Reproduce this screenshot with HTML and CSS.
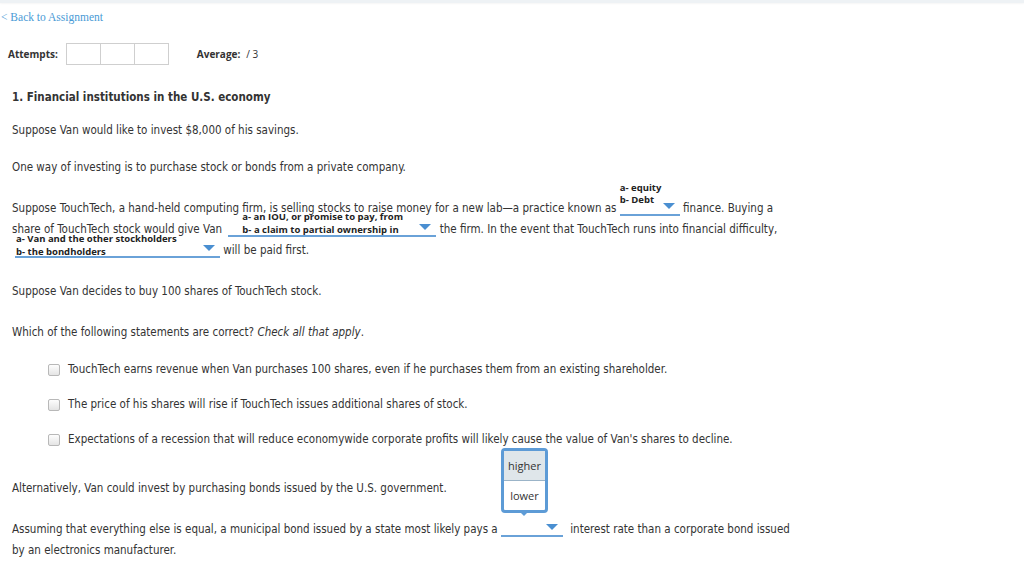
FILE: index.html
```html
<!DOCTYPE html>
<html>
<head>
    <title>Financial institutions in the U.S. economy</title>
    <link rel="stylesheet" href="styles.css">
</head>
<body>
    <div class="topbar"></div>
    <div class="header">
        <a class="back-link" href="#">&lt; Back to Assignment</a>
        <div class="attempts">
            <span class="attempts-label">Attempts:</span>
            <div class="attempt-boxes"><span></span><span></span><span></span></div>
            <span class="attempts-label average">Average:</span>
            <span class="score">/ 3</span>
        </div>
    </div>

    <div class="question">
        <h2 class="title">1. Financial institutions in the U.S. economy</h2>
        <p class="gap-12">Suppose Van would like to invest $8,000 of his savings.</p>
        <p class="gap-16">One way of investing is to purchase stock or bonds from a private company.</p>
        <p>Suppose TouchTech, a hand-held computing firm, is selling stocks to raise money for a new lab&mdash;a practice known as <span class="blank blank-finance"><span class="note">a- equity<br>b- Debt</span></span> finance. Buying a share of TouchTech stock would give Van <span class="blank blank-give"><span class="note">a- an IOU, or promise to pay, from<br>b- a claim to partial ownership in</span></span> the firm. In the event that TouchTech runs into financial difficulty, <span class="blank blank-paid"><span class="note">a- Van and the other stockholders<br>b- the bondholders</span></span> will be paid first.</p>
        <p>Suppose Van decides to buy 100 shares of TouchTech stock.</p>
        <p>Which of the following statements are correct? <em>Check all that apply</em>.</p>

        <ul class="choices">
            <li><input type="checkbox"> TouchTech earns revenue when Van purchases 100 shares, even if he purchases them from an existing shareholder.</li>
            <li><input type="checkbox"> The price of his shares will rise if TouchTech issues additional shares of stock.</li>
            <li><input type="checkbox"> Expectations of a recession that will reduce economywide corporate profits will likely cause the value of Van's shares to decline.</li>
        </ul>

        <p class="gap-28">Alternatively, Van could invest by purchasing bonds issued by the U.S. government.</p>
        <p>Assuming that everything else is equal, a municipal bond issued by a state most likely pays a <span class="blank blank-rate"><span class="popup"><span class="option option-active">higher</span><span class="option">lower</span></span></span> interest rate than a corporate bond issued by an electronics manufacturer.</p>
    </div>
</body>
</html>
```

FILE: styles.css
```css
body {
    margin: 0;
    padding: 0;
    background: #fff;
    color: #333;
    font-family: "DejaVu Sans", sans-serif;
}
.topbar {
    height: 3px;
    background: #eef2f5;
    box-shadow: 0 1px 2px rgba(0, 0, 0, 0.04);
}
.header {
    padding: 7px 0 0 0;
}
.back-link {
    display: block;
    padding-left: 1px;
    font-family: "Liberation Serif", serif;
    font-size: 11.5px;
    line-height: 14px;
    color: #4a9bd6;
    text-decoration: none;
}
.attempts {
    display: flex;
    align-items: center;
    margin-top: 19px;
    padding-left: 8px;
    font-family: "Open Sans", sans-serif;
    font-size: 10px;
    color: #333;
}
.attempts-label {
    font-weight: bold;
}
.attempt-boxes {
    display: flex;
    margin-left: 8px;
    border: 1px solid #cfcfcf;
}
.attempt-boxes span {
    width: 33px;
    height: 20px;
    border-left: 1px solid #cfcfcf;
}
.attempt-boxes span:first-child {
    border-left: none;
}
.average {
    margin-left: 28px;
}
.score {
    margin-left: 6px;
}

.question {
    width: 786px;
    padding-left: 12px;
    font-family: "DejaVu Sans Condensed", "DejaVu Sans", sans-serif;
    font-stretch: semi-condensed;
    font-size: 11.5px;
    line-height: 21px;
}
.title {
    margin: 22px 0 0;
    font-size: 11.5px;
    font-weight: bold;
    line-height: 21px;
}
.question p {
    margin: 20px 0 0;
}
.question p.gap-12 {
    margin-top: 12px;
}
.question p.gap-16 {
    margin-top: 16px;
}
.question p.gap-28 {
    margin-top: 28px;
}

/* dropdown blanks */
.blank {
    position: relative;
    display: inline-block;
    height: 14px;
    vertical-align: -4px;
    border-bottom: 2px solid #6aa2d8;
}
.blank::after {
    content: "";
    position: absolute;
    right: 5px;
    bottom: 5px;
    border-left: 6px solid transparent;
    border-right: 6px solid transparent;
    border-top: 6px solid #4a8fd1;
}
.blank-finance {
    width: 60px;
}
.blank-give {
    width: 208px;
    margin-left: 3px;
}
.blank-paid {
    width: 205px;
    margin-left: 3px;
}
.blank-rate {
    width: 62px;
    margin-right: 4px;
}
.note {
    position: absolute;
    left: 0;
    white-space: nowrap;
    font-family: "Open Sans", sans-serif;
    font-stretch: normal;
    font-size: 9.5px;
    font-weight: bold;
    line-height: 13px;
    color: #222;
}
.blank-finance .note {
    bottom: 8px;
    line-height: 12px;
}
.blank-give .note {
    left: 14px;
    bottom: -1px;
}
.blank-paid .note {
    left: 1px;
    bottom: -2px;
}

/* open dropdown menu */
.popup {
    position: absolute;
    left: 0;
    bottom: calc(100% + 8px);
    display: flex;
    flex-direction: column;
    width: 41px;
    border: 3px solid #5d9bd6;
    border-radius: 4px;
    background: #fff;
}
.popup::after {
    content: "";
    position: absolute;
    left: 50%;
    top: 100%;
    margin-left: -6px;
    border-left: 6px solid transparent;
    border-right: 6px solid transparent;
    border-top: 6px solid #5d9bd6;
}
.option {
    height: 29px;
    line-height: 29px;
    text-align: center;
    font-family: "Open Sans", sans-serif;
    font-stretch: normal;
    font-size: 11px;
    color: #333;
}
.option-active {
    background: #dfe6ea;
    border-bottom: 1px solid #9bb4c8;
}

/* checklist */
.choices {
    list-style: none;
    margin: 16px 0 0;
    padding: 0 0 0 36px;
}
.choices li {
    display: flex;
    align-items: center;
    gap: 8px;
    margin-top: 14px;
}
.choices li:first-child {
    margin-top: 0;
}
.choices input {
    appearance: none;
    width: 12px;
    height: 12px;
    margin: 0;
    border: 1px solid #b8b8b8;
    border-radius: 2px;
    background: linear-gradient(#fdfdfd, #e4e4e4);
}
```
